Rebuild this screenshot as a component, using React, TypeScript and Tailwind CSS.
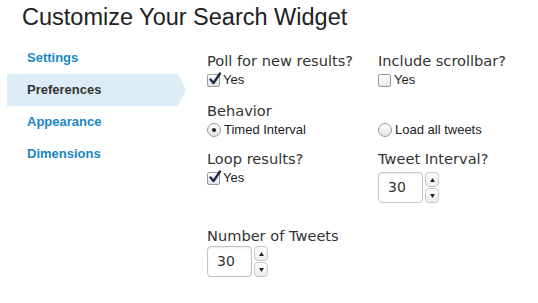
import React from 'react';

const labelFont = { fontFamily: '"DejaVu Sans", "Noto Sans", sans-serif' };

function CheckBox({ checked }: { checked: boolean }) {
  return (
    <span className="relative inline-block w-[13px] h-[13px] mr-[3px] rounded-[2px] border border-[#9a9a9a] bg-gradient-to-b from-white to-[#e6e6e6] shadow-[inset_0_1px_0_#fff]">
      {checked && (
        <svg viewBox="0 0 14 14" className="absolute left-[0px] top-[-3px] w-[14px] h-[14px]">
          <path d="M2.5 7.5 L5.5 11 L12 1.5" fill="none" stroke="#1d2b4f" strokeWidth="2.4" strokeLinecap="round" strokeLinejoin="round" />
        </svg>
      )}
    </span>
  );
}

function Radio({ checked }: { checked: boolean }) {
  return (
    <span className="relative inline-flex items-center justify-center w-[14px] h-[14px] mr-[3px] rounded-full border border-[#9a9a9a] bg-gradient-to-b from-white to-[#e3e3e3]">
      {checked && <span className="w-[4px] h-[4px] rounded-full bg-[#222]" />}
    </span>
  );
}

function Spinner({ value }: { value: string }) {
  return (
    <div className="flex items-center gap-[2px]">
      <div
        className="w-[45px] h-[31px] rounded-[4px] border border-[#c4c4c4] bg-white flex items-center pl-[9px] text-[14px] text-[#333] shadow-[inset_0_1px_2px_rgba(0,0,0,0.08)]"
        style={labelFont}
      >
        {value}
      </div>
      <div className="flex flex-col gap-[1px]">
        <div className="w-[14px] h-[15px] rounded-[4px] border border-[#c8c8c8] bg-gradient-to-b from-white to-[#ececec] flex items-center justify-center">
          <svg viewBox="0 0 6 5" className="w-[5px] h-[4px]"><path d="M3 0 L6 5 L0 5 Z" fill="#222" /></svg>
        </div>
        <div className="w-[14px] h-[15px] rounded-[4px] border border-[#c8c8c8] bg-gradient-to-b from-white to-[#ececec] flex items-center justify-center">
          <svg viewBox="0 0 6 5" className="w-[5px] h-[4px]"><path d="M0 0 L6 0 L3 5 Z" fill="#222" /></svg>
        </div>
      </div>
    </div>
  );
}

function Label({ children }: { children: React.ReactNode }) {
  return (
    <div className="h-[20px] leading-[21px] text-[14.6px] text-[#333]" style={labelFont}>
      {children}
    </div>
  );
}

function Option({ children }: { children: React.ReactNode }) {
  return (
    <div className="h-[20px] flex items-center text-[13px] text-[#222]" style={{ fontFamily: '"Liberation Sans", Arial, sans-serif' }}>
      {children}
    </div>
  );
}

const nav = ['Settings', 'Preferences', 'Appearance', 'Dimensions'];

export default function App() {
  return (
    <div className="w-[538px] h-[303px] bg-white overflow-hidden" style={{ fontFamily: '"Liberation Sans", Arial, sans-serif' }}>
      <h1 className="h-[42px] pl-[22px] pt-[2px] text-[23.5px] leading-[30px] text-[#222]">Customize Your Search Widget</h1>
      <div className="flex">
        <ul className="w-[200px] shrink-0">
          {nav.map(item =>
            item === 'Preferences' ? (
              <li key={item} className="relative ml-[7px] h-[32px] w-[171px] bg-[#ddedf7] flex items-center pl-[20px] text-[13px] font-bold text-[#333]">
                {item}
                <span className="absolute right-[-8px] top-0 w-0 h-0 border-y-[16px] border-y-transparent border-l-[8px] border-l-[#ddedf7]" />
              </li>
            ) : (
              <li key={item} className="ml-[7px] h-[32px] flex items-center pl-[20px] text-[13px] font-bold text-[#1a87c4]">
                {item}
              </li>
            )
          )}
        </ul>
        <div className="pt-[8px] pl-[7px]">
          <div className="grid grid-cols-[171px_160px]">
            <div>
              <Label>Poll for new results?</Label>
              <Option><CheckBox checked />Yes</Option>
            </div>
            <div>
              <Label>Include scrollbar?</Label>
              <Option><CheckBox checked={false} />Yes</Option>
            </div>
            <div className="mt-[10px]">
              <Label>Behavior</Label>
              <Option><Radio checked />Timed Interval</Option>
            </div>
            <div className="mt-[10px] flex flex-col justify-end">
              <Option><Radio checked={false} />Load all tweets</Option>
            </div>
            <div className="mt-[8px]">
              <Label>Loop results?</Label>
              <Option><CheckBox checked />Yes</Option>
            </div>
            <div className="mt-[8px]">
              <Label>Tweet Interval?</Label>
              <div className="mt-[4px]"><Spinner value="30" /></div>
            </div>
            <div className="mt-[22px] col-span-2">
              <Label>Number of Tweets</Label>
              <div className="mt-[1px]"><Spinner value="30" /></div>
            </div>
          </div>
        </div>
      </div>
    </div>
  );
}
